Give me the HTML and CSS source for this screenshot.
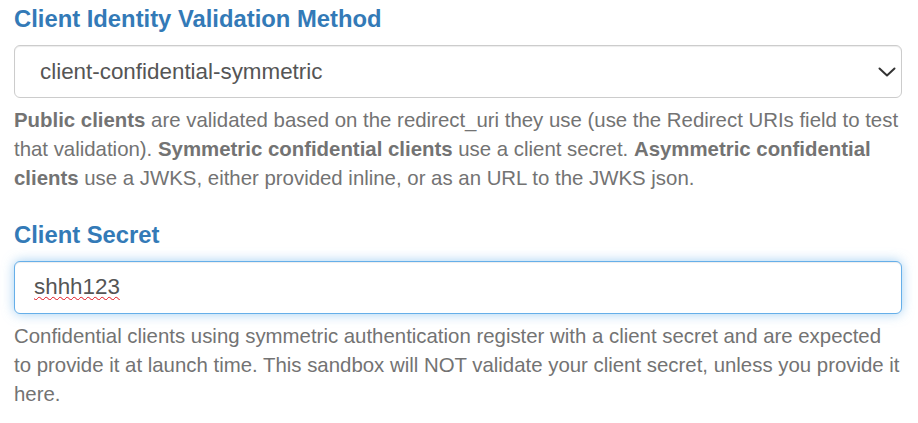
FILE: index.html
```html
<!DOCTYPE html>
<html lang="en">
<head>
<meta charset="utf-8">
<title>Client settings</title>
<link rel="stylesheet" href="styles.css">
</head>
<body>
<form class="page">
  <div class="form-group">
    <label class="field-label" for="auth-method">Client Identity Validation Method</label>
    <div class="select-wrap">
      <select id="auth-method" class="form-control select-control">
        <option>client-public</option>
        <option selected>client-confidential-symmetric</option>
        <option>client-confidential-asymmetric</option>
      </select>
      <svg class="select-arrow" width="18" height="10" viewBox="0 0 18 10" aria-hidden="true">
        <path d="M1.5 1.5 L9 8.5 L16.5 1.5" fill="none" stroke="#333" stroke-width="2" stroke-linecap="round" stroke-linejoin="round"/>
      </svg>
    </div>
    <p class="help-block"><b>Public clients</b> are validated based on the redirect_uri they use (use the Redirect URIs field to test that validation). <b>Symmetric confidential clients</b> use a client secret. <b>Asymmetric confidential clients</b> use a JWKS, either provided inline, or as an URL to the JWKS json.</p>
  </div>
  <div class="form-group">
    <label class="field-label" for="client-secret">Client Secret</label>
    <input id="client-secret" class="form-control input-control is-focused" type="text" value="shhh123">
    <p class="help-block">Confidential clients using symmetric authentication register with a client secret and are expected to provide it at launch time. This sandbox will NOT validate your client secret, unless you provide it here.</p>
  </div>
</form>
</body>
</html>
```
FILE: styles.css
```css
html, body {
  margin: 0;
  padding: 0;
  background: #fff;
}

body {
  font-family: "Liberation Sans", Arial, Helvetica, sans-serif;
  color: #333;
}

.page {
  width: 888px;
  padding: 5px 0 0 14px;
}

.form-group {
  display: flex;
  flex-direction: column;
}

.form-group + .form-group {
  margin-top: 27.6px;
}

.field-label {
  display: block;
  font-size: 23.8px;
  line-height: 27px;
  font-weight: bold;
  color: #337ab7;
  margin: 0 0 13px 0;
}

.form-control {
  box-sizing: border-box;
  width: 888px;
  height: 53px;
  margin: 0;
  font-family: "Liberation Sans", Arial, Helvetica, sans-serif;
  font-size: 22.4px;
  color: #555;
  background: #fff;
  border: 1px solid #ccc;
  border-radius: 6px;
  box-shadow: inset 0 1px 1px rgba(0, 0, 0, 0.075);
  outline: none;
}

.select-wrap {
  position: relative;
  width: 888px;
}

.select-control {
  -webkit-appearance: none;
  appearance: none;
  padding: 0 40px 0 25px;
}

.select-arrow {
  position: absolute;
  right: 6px;
  top: 22px;
  pointer-events: none;
}

.input-control {
  padding: 0 19px;
  text-decoration: underline wavy #e0141e;
  text-decoration-thickness: 1px;
  text-underline-offset: 2px;
  text-decoration-skip-ink: none;
}

.input-control.is-focused {
  border-color: #66afe9;
  box-shadow: inset 0 1px 1px rgba(0, 0, 0, 0.075), 0 0 12px rgba(102, 175, 233, 0.6);
}

.help-block {
  margin: 8.4px 0 0 0;
  width: 888px;
  font-size: 20.4px;
  line-height: 29px;
  color: #737373;
}

.help-block b {
  font-weight: bold;
}
```
